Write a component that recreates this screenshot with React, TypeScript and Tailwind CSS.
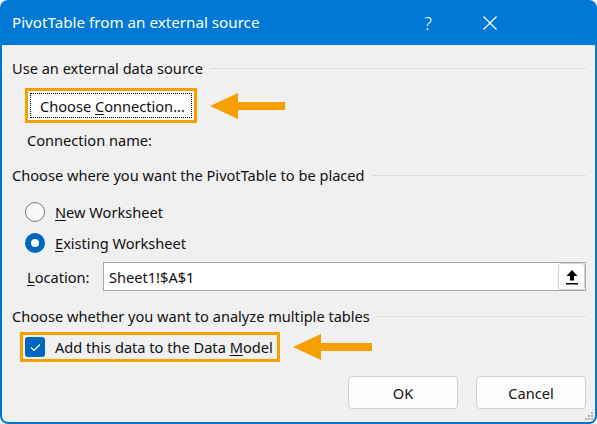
import React from "react";

function Arrow({ width }: { width: number }) {
  return (
    <svg width={width} height={28} viewBox={`0 0 ${width} 28`} className="block">
      <polygon points={`0,14 28,1 28,10 ${width},10 ${width},18 28,18 28,27`} fill="#f59f00" />
    </svg>
  );
}

function Header({ text }: { text: string }) {
  return (
    <div className="flex items-center h-[20px] pl-[10px] pr-[9px]">
      <span className="whitespace-nowrap">{text}</span>
      <div className="flex-1 h-px bg-[#dcdcdc] ml-[7px]" />
    </div>
  );
}

export default function App() {
  return (
    <div
      className="w-[597px] h-[424px] bg-[#0078d4] rounded-[8px] flex flex-col overflow-hidden text-[14.6px] text-[#111]"
      style={{ fontFamily: '"Noto Sans", "Open Sans", sans-serif' }}
    >
      <div className="h-[45px] shrink-0 flex items-center text-white">
        <span className="ml-[12px] text-[15.2px] leading-none flex-1">PivotTable from an external source</span>
        <span className="text-[18px] font-light leading-none mr-[51px]">?</span>
        <svg width="14" height="14" viewBox="0 0 14 14" className="mr-[100px] mt-[1px]">
          <path d="M0.5 0.5 L13.5 13.5 M13.5 0.5 L0.5 13.5" stroke="white" strokeWidth="1.2" />
        </svg>
      </div>
      <div className="flex-1 mx-[2px] mb-[2px] bg-[#f0f0f0] rounded-b-[6px] relative flex flex-col leading-[20px]">
        <div className="mt-[13px]">
          <Header text="Use an external data source" />
        </div>
        <div className="mt-[10px] flex items-center pl-[23px]">
          <div className="h-[35px] w-[172px] border-[3px] border-[#f5a000] bg-white p-[2px]">
            <div className="h-full w-full border border-dotted border-black flex items-center pl-[9px]">
              <span>
                Choose <span className="underline underline-offset-2">C</span>onnection...
              </span>
            </div>
          </div>
          <div className="ml-[13px]">
            <Arrow width={75} />
          </div>
        </div>
        <div className="mt-[7px] pl-[25px] h-[20px]">Connection name:</div>
        <div className="mt-[15px]">
          <Header text="Choose where you want the PivotTable to be placed" />
        </div>
        <div className="mt-[15px] h-[24px] flex items-center pl-[23px]">
          <div className="w-[20px] h-[20px] rounded-full border-[1.5px] border-[#7a7a7a] bg-[#f8f8f8]" />
          <span className="ml-[10px]">
            <span className="underline underline-offset-2">N</span>ew Worksheet
          </span>
        </div>
        <div className="mt-[7px] h-[24px] flex items-center pl-[23px]">
          <div className="w-[20px] h-[20px] rounded-full border-[6.5px] border-[#0067c0] bg-white" />
          <span className="ml-[10px]">
            <span className="underline underline-offset-2">E</span>xisting Worksheet
          </span>
        </div>
        <div className="mt-[7px] h-[29px] flex items-center pl-[25px] pr-[9px]">
          <span className="w-[76px]">
            <span className="underline underline-offset-2">L</span>ocation:
          </span>
          <div className="flex-1 h-full border border-[#a8a8a8] bg-white flex items-center pl-[5px]">
            <span className="flex-1">Sheet1!$A$1</span>
            <div className="w-[27px] h-[27px] border border-[#d0d0d0] rounded-[3px] flex items-center justify-center bg-white">
              <svg width="14" height="16" viewBox="0 0 14 16">
                <path d="M7 1 L12.5 7 H9 V11.5 H5 V7 H1.5 Z" fill="black" />
                <rect x="1" y="14" width="12" height="1.5" fill="black" />
              </svg>
            </div>
          </div>
        </div>
        <div className="mt-[15px]">
          <Header text="Choose whether you want to analyze multiple tables" />
        </div>
        <div className="mt-[6px] flex items-center pl-[18px]">
          <div className="h-[30px] w-[260px] border-[3px] border-[#f5a000] flex items-center pl-[2px]">
            <div className="w-[20px] h-[20px] rounded-[3px] bg-[#0067c0] flex items-center justify-center">
              <svg width="11" height="9" viewBox="0 0 11 9">
                <path d="M1 4.5 L4 7.5 L10 1.5" stroke="white" strokeWidth="1.1" fill="none" />
              </svg>
            </div>
            <span className="ml-[10px] whitespace-nowrap">
              Add this data to the Data <span className="underline underline-offset-2">M</span>odel
            </span>
          </div>
          <div className="ml-[13px]">
            <Arrow width={79} />
          </div>
        </div>
        <div className="mt-[14px] flex justify-end gap-[18px] pr-[9px]">
          <button className="w-[110px] h-[33px] bg-[#fdfdfd] border border-[#d0d0d0] rounded-[4px]">OK</button>
          <button className="w-[110px] h-[33px] bg-[#fdfdfd] border border-[#d0d0d0] rounded-[4px]">Cancel</button>
        </div>
        <svg width="10" height="10" viewBox="0 0 10 10" className="absolute right-[1px] bottom-[1px]">
          <rect x="7" y="1" width="2" height="2" fill="#b4b4b4" />
          <rect x="4" y="4" width="2" height="2" fill="#b4b4b4" />
          <rect x="7" y="4" width="2" height="2" fill="#b4b4b4" />
          <rect x="1" y="7" width="2" height="2" fill="#b4b4b4" />
          <rect x="4" y="7" width="2" height="2" fill="#b4b4b4" />
          <rect x="7" y="7" width="2" height="2" fill="#b4b4b4" />
        </svg>
      </div>
    </div>
  );
}
